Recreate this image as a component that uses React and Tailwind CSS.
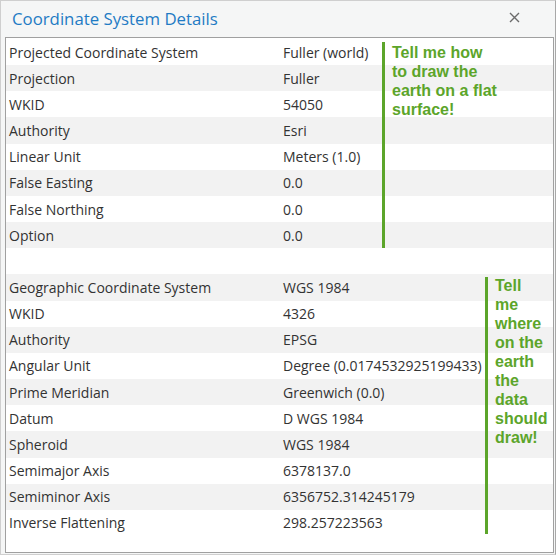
import React from "react";

const rows = [
  ["Projected Coordinate System", "Fuller (world)"],
  ["Projection", "Fuller"],
  ["WKID", "54050"],
  ["Authority", "Esri"],
  ["Linear Unit", "Meters (1.0)"],
  ["False Easting", "0.0"],
  ["False Northing", "0.0"],
  ["Option", "0.0"],
  ["", ""],
  ["Geographic Coordinate System", "WGS 1984"],
  ["WKID", "4326"],
  ["Authority", "EPSG"],
  ["Angular Unit", "Degree (0.0174532925199433)"],
  ["Prime Meridian", "Greenwich (0.0)"],
  ["Datum", "D WGS 1984"],
  ["Spheroid", "WGS 1984"],
  ["Semimajor Axis", "6378137.0"],
  ["Semiminor Axis", "6356752.314245179"],
  ["Inverse Flattening", "298.257223563"],
];

export default function App() {
  return (
    <div className="w-[556px] h-[555px] bg-[#f5f6f6] border border-[#cfcfcf] border-r-[#a8a8a8] flex flex-col" style={{ fontFamily: '"Open Sans", "Noto Sans", sans-serif' }}>
      <div className="h-[36px] flex items-center justify-between pl-[11px] pr-[35px]">
        <span className="text-[#1f7bc4] text-[16.8px]">Coordinate System Details</span>
        <svg width="11" height="11" viewBox="0 0 11 11" className="mt-[-4px]">
          <path d="M1 1 L10 10 M10 1 L1 10" stroke="#6b6b6b" strokeWidth="1.4" />
        </svg>
      </div>
      <div className="ml-[4px] mr-[1px] mb-[1px] flex-1 bg-white border border-[#a0a0a0] relative pt-[1px]">
        {rows.map(([k, v], i) => (
          <div key={i} className={`h-[26.17px] flex items-center text-[14px] text-[#333] ${i % 2 ? "bg-[#f2f2f2]" : "bg-white"}`}>
            <span className="w-[277px] pl-[3px] whitespace-nowrap">{k}</span>
            <span className="whitespace-nowrap">{v}</span>
          </div>
        ))}
        <div className="absolute left-[376px] top-[4px] h-[206px] w-[3px] bg-[#5ca52a]" />
        <div className="absolute left-[386px] top-[5px] text-[#5ca52a] font-bold text-[16px] leading-[19px]" style={{ fontFamily: '"Liberation Sans", Arial, sans-serif' }}>
          Tell me how<br />to draw the<br />earth on a flat<br />surface!
        </div>
        <div className="absolute left-[479px] top-[239px] h-[257px] w-[3px] bg-[#5ca52a]" />
        <div className="absolute left-[489px] top-[238px] text-[#5ca52a] font-bold text-[16px] leading-[19px]" style={{ fontFamily: '"Liberation Sans", Arial, sans-serif' }}>
          Tell<br />me<br />where<br />on the<br />earth<br />the<br />data<br />should<br />draw!
        </div>
      </div>
    </div>
  );
}
